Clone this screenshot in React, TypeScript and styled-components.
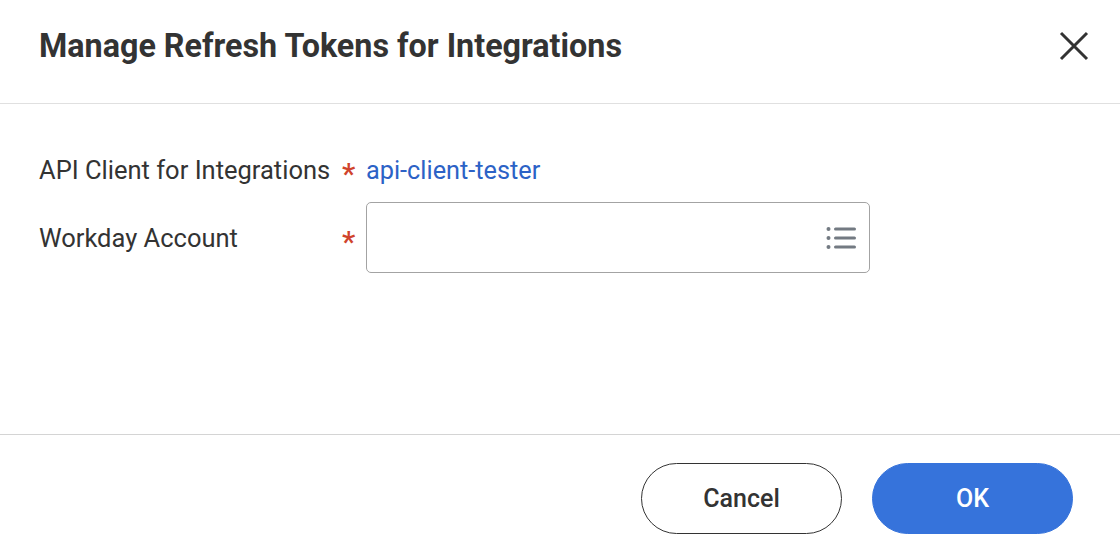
import styled, { createGlobalStyle } from 'styled-components';

const GlobalStyle = createGlobalStyle`
  html, body {
    margin: 0;
    padding: 0;
    background: #ffffff;
  }

  body {
    font-family: Roboto, "Liberation Sans", sans-serif;
    color: #333333;
  }
`;

const Dialog = styled.div`
  width: 1120px;
  height: 550px;
  background-color: white;

  display: flex;
  flex-direction: column;
`;

const Header = styled.header`
  height: 104px;
  flex-shrink: 0;

  display: flex;
  align-items: center;
  justify-content: space-between;

  padding: 0 30px 11px 39px;
  border-bottom: 1px solid #e0e0e0;
  box-sizing: border-box;
`;

const Title = styled.h1`
  margin: 0;
  font-size: 32.3px;
  font-weight: 700;
  color: #333333;
  letter-spacing: 0;
`;

const CloseButton = styled.button`
  width: 32px;
  height: 32px;
  padding: 0;
  border: none;
  background: none;
  cursor: pointer;

  display: flex;
  align-items: center;
  justify-content: center;
`;

const Body = styled.main`
  flex: 1;

  display: flex;
  flex-direction: column;
  gap: 10px;

  padding: 44px 0 0 39px;
`;

const Row = styled.div`
  display: flex;
  align-items: center;
  min-height: 44px;
`;

const Label = styled.label`
  width: 303px;
  font-size: 25.5px;
  color: #333333;
`;

const Required = styled.span`
  width: 24px;
  font-size: 30px;
  font-weight: 500;
  color: #d0432c;
  line-height: 1;
  position: relative;
  top: 4px;
`;

const LinkValue = styled.a`
  font-size: 25.3px;
  color: #2c62c6;
  text-decoration: none;
  cursor: pointer;
`;

const InputBox = styled.div`
  width: 504px;
  height: 71px;
  box-sizing: border-box;
  border: 1px solid #a3a3a3;
  border-radius: 5px;

  display: flex;
  align-items: center;
  justify-content: flex-end;
  padding-right: 13px;
`;

const Footer = styled.footer`
  height: 116px;
  flex-shrink: 0;
  box-sizing: border-box;
  border-top: 1px solid #d4d4d4;

  display: flex;
  justify-content: flex-end;
  align-items: flex-start;
  gap: 30px;

  padding: 28px 47px 0 0;
`;

const Button = styled.button<{ primary?: boolean }>`
  width: 201px;
  height: 71px;
  box-sizing: border-box;
  border-radius: 36px;
  border: ${({ primary }) => (primary ? '1px solid #3673db' : '1.5px solid #333333')};
  background-color: ${({ primary }) => (primary ? '#3673db' : '#ffffff')};
  color: ${({ primary }) => (primary ? '#ffffff' : '#333333')};

  font-family: Roboto, "Liberation Sans", sans-serif;
  font-size: 25px;
  font-weight: 500;
  cursor: pointer;
`;

function CloseIcon() {
  return (
    <svg width="30" height="30" viewBox="0 0 30 30">
      <path d="M2 2 L28 28 M28 2 L2 28" stroke="#333333" strokeWidth="3" strokeLinecap="butt" />
    </svg>
  );
}

function ListIcon() {
  return (
    <svg width="30" height="24" viewBox="0 0 30 24">
      <g fill="#737a82">
        <circle cx="2.5" cy="3" r="2" />
        <circle cx="2.5" cy="12" r="2" />
        <circle cx="2.5" cy="21" r="2" />
        <rect x="8" y="1.5" width="22" height="3" rx="1.5" />
        <rect x="8" y="10.5" width="22" height="3" rx="1.5" />
        <rect x="8" y="19.5" width="22" height="3" rx="1.5" />
      </g>
    </svg>
  );
}

function App() {
  return (
    <Dialog>
      <GlobalStyle />
      <Header>
        <Title>Manage Refresh Tokens for Integrations</Title>
        <CloseButton aria-label="Close">
          <CloseIcon />
        </CloseButton>
      </Header>
      <Body>
        <Row>
          <Label>API Client for Integrations</Label>
          <Required>*</Required>
          <LinkValue>api-client-tester</LinkValue>
        </Row>
        <Row>
          <Label>Workday Account</Label>
          <Required>*</Required>
          <InputBox>
            <ListIcon />
          </InputBox>
        </Row>
      </Body>
      <Footer>
        <Button>Cancel</Button>
        <Button primary>OK</Button>
      </Footer>
    </Dialog>
  );
}

export default App;
